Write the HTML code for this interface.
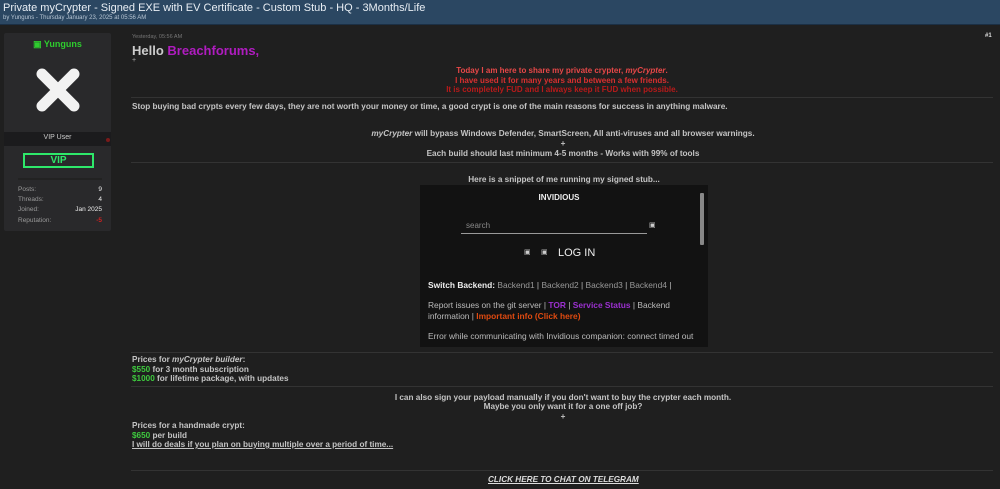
<!DOCTYPE html>
<html><head><style>
*{margin:0;padding:0;box-sizing:border-box}
body{width:1000px;height:489px;background:#1f1f1f;font-family:"Liberation Sans",Arial,sans-serif;color:#bbb;overflow:hidden;position:relative}
.hdr{position:absolute;left:0;top:0;width:1000px;height:25px;background:#2b4762;border-bottom:1px solid #1b2f44}
.hdr .t{position:absolute;left:3px;top:2px;font-size:11px;color:#e8eef4}
.hdr .s{position:absolute;left:3px;top:15px;font-size:6px;color:#b8c6d4}
.side{position:absolute;left:4px;top:33px;width:107px;height:198px;background:#29292b;border-radius:2px}
.abs{position:absolute}
.b{font-weight:bold}
.c{text-align:center;white-space:nowrap}
.f9{font-size:8.2px;font-weight:bold;color:#c4c4c4;white-space:nowrap}
.hr{position:absolute;left:131px;width:862px;height:1px;background:#333}
.g{color:#3ec93e}
</style></head><body>
<div class="hdr"><div class="t">Private myCrypter - Signed EXE with EV Certificate - Custom Stub - HQ - 3Months/Life</div><div class="s">by Yunguns - Thursday January 23, 2025 at 05:56 AM</div></div>

<div class="side">
  <div class="abs b" style="left:0;width:107px;top:6px;text-align:center;font-size:9px;color:#2ecc2e">▣ Yunguns</div>
  <svg class="abs" style="left:31px;top:34px" width="46" height="46" viewBox="0 0 46 46"><g stroke="#f2f2f2" stroke-width="11" stroke-linecap="round"><line x1="7" y1="7" x2="39" y2="39"/><line x1="39" y1="7" x2="7" y2="39"/></g></svg>
  <div class="abs" style="left:0;top:99px;width:107px;height:14px;background:#1b1b1d"></div>
  <div class="abs" style="left:0;top:101px;width:107px;text-align:center;font-size:7px;color:#ccc">VIP User</div>
  <div class="abs" style="left:102px;top:105px;width:4px;height:4px;border-radius:2px;background:#7a1a1a"></div>
  <div class="abs" style="left:19px;top:120px;width:71px;height:15px;border:2px solid #2ee86a;color:#2ee86a;font-weight:bold;font-size:10px;text-align:center;line-height:11px">VIP</div>
  <div class="abs" style="left:14px;top:145px;width:84px;height:2px;background:#222"></div>
  <div class="abs" style="left:14px;top:152px;width:84px;font-size:6.5px;line-height:10.2px;color:#999">
    <div>Posts:<span style="float:right;color:#eee">9</span></div>
    <div>Threads:<span style="float:right;color:#eee">4</span></div>
    <div>Joined:<span style="float:right;color:#eee">Jan 2025</span></div>
    <div>Reputation:<span style="float:right;color:#d02020;font-weight:bold">-5</span></div>
  </div>
</div>

<div class="abs" style="left:132px;top:34px;font-size:5.5px;color:#777">Yesterday, 05:56 AM</div>
<div class="abs b" style="left:985px;top:33px;font-size:6px;color:#ddd">#1</div>
<div class="abs b" style="left:132px;top:43px;font-size:13px;color:#ccc">Hello <span style="color:#b01cc0">Breachforums,</span></div>
<div class="abs" style="left:132px;top:57px;font-size:7px;color:#aaa">+</div>

<div class="abs b c" style="left:431px;width:262px;top:66px;font-size:8px;line-height:9.5px">
<div style="color:#e84848">Today I am here to share my private crypter, <i>myCrypter</i>.</div>
<div style="color:#d83030">I have used it for many years and between a few friends.</div>
<div style="color:#b81a1a">It is completely FUD and I always keep it FUD when possible.</div>
</div>
<div class="hr" style="top:97px"></div>
<div class="abs f9" style="left:132px;top:102px">Stop buying bad crypts every few days, they are not worth your money or time, a good crypt is one of the main reasons for success in anything malware.</div>
<div class="abs f9 c" style="left:300px;width:526px;top:129px;line-height:9.8px">
<div><i>myCrypter</i> will bypass Windows Defender, SmartScreen, All anti-viruses and all browser warnings.</div>
<div>+</div>
<div>Each build should last minimum 4-5 months - Works with 99% of tools</div>
</div>
<div class="hr" style="top:162px"></div>
<div class="abs f9 c" style="left:420px;width:288px;top:175px">Here is a snippet of me running my signed stub...</div>

<div class="abs" style="left:420px;top:185px;width:288px;height:162px;background:#121212">
  <div class="abs b c" style="left:0;width:278px;top:8px;font-size:8px;color:#eee">INVIDIOUS</div>
  <div class="abs" style="left:280px;top:8px;width:4px;height:52px;background:#888;border-radius:1px"></div>
  <div class="abs" style="left:46px;top:36px;font-size:8px;color:#888">search</div>
  <div class="abs" style="left:41px;top:48px;width:186px;height:1px;background:#999"></div>
  <div class="abs" style="left:229px;top:36px;font-size:7px;color:#ccc">▣</div>
  <div class="abs" style="left:104px;top:63px;font-size:7px;color:#ccc">▣</div>
  <div class="abs" style="left:121px;top:63px;font-size:7px;color:#ccc">▣</div>
  <div class="abs" style="left:138px;top:62px;font-size:11px;color:#eee">LOG IN</div>
  <div class="abs" style="left:8px;top:95px;width:272px;font-size:8.4px;line-height:11px;color:#bbb">
    <div><b style="color:#eee">Switch Backend:</b> <span style="color:#999">Backend1</span> | <span style="color:#999">Backend2</span> | <span style="color:#999">Backend3</span> | <span style="color:#999">Backend4</span> |</div>
    <div style="margin-top:9px">Report issues on the git server | <b style="color:#9b30d0">TOR</b> | <b style="color:#9b30d0">Service Status</b> | Backend information | <b style="color:#e04a10">Important info (Click here)</b></div>
    <div style="margin-top:9px;white-space:nowrap">Error while communicating with Invidious companion: connect timed out</div>
  </div>
</div>

<div class="hr" style="top:352px"></div>
<div class="abs f9" style="left:132px;top:355px;line-height:9.5px">
<div>Prices for <i>myCrypter builder</i>:</div>
<div><span class="g">$550</span> for 3 month subscription</div>
<div><span class="g">$1000</span> for lifetime package, with updates</div>
</div>
<div class="hr" style="top:386px"></div>
<div class="abs f9 c" style="left:363px;width:400px;top:393px;line-height:9.4px">
<div>I can also sign your payload manually if you don't want to buy the crypter each month.</div>
<div>Maybe you only want it for a one off job?</div>
<div>+</div>
</div>
<div class="abs f9" style="left:132px;top:421px;line-height:9.5px">
<div>Prices for a handmade crypt:</div>
<div><span class="g">$650</span> per build</div>
<div style="text-decoration:underline">I will do deals if you plan on buying multiple over a period of time...</div>
</div>
<div class="hr" style="top:470px"></div>
<div class="abs f9" style="left:488px;top:475px;font-style:italic;text-decoration:underline;color:#ddd">CLICK HERE TO CHAT ON TELEGRAM</div>
</body></html>
